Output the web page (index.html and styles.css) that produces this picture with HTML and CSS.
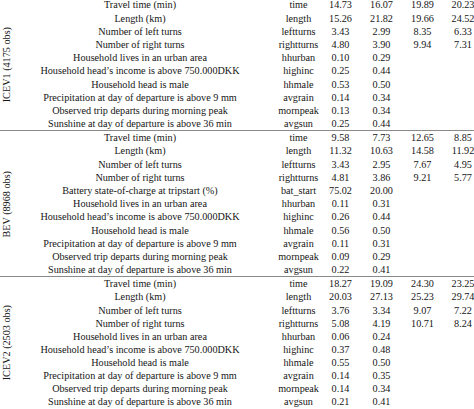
FILE: index.html
```html
<!DOCTYPE html>
<html>
<head>
<meta charset="utf-8">
<link rel="stylesheet" href="styles.css">
</head>
<body>
<div class="table">
  <section class="group g1">
    <div class="glabel"><span>ICEV1 (4175 obs)</span></div>
    <div class="row"><span class="lab">Travel time (min)</span><span class="var">time</span><span class="n">14.73</span><span class="n">16.07</span><span class="n">19.89</span><span class="n">20.23</span></div>
    <div class="row"><span class="lab">Length (km)</span><span class="var">length</span><span class="n">15.26</span><span class="n">21.82</span><span class="n">19.66</span><span class="n">24.52</span></div>
    <div class="row"><span class="lab">Number of left turns</span><span class="var">leftturns</span><span class="n">3.43</span><span class="n">2.99</span><span class="n">8.35</span><span class="n">6.33</span></div>
    <div class="row"><span class="lab">Number of right turns</span><span class="var">rightturns</span><span class="n">4.80</span><span class="n">3.90</span><span class="n">9.94</span><span class="n">7.31</span></div>
    <div class="row"><span class="lab">Household lives in an urban area</span><span class="var">hhurban</span><span class="n">0.10</span><span class="n">0.29</span><span class="n"></span><span class="n"></span></div>
    <div class="row"><span class="lab">Household head’s income is above 750.000DKK</span><span class="var">highinc</span><span class="n">0.25</span><span class="n">0.44</span><span class="n"></span><span class="n"></span></div>
    <div class="row"><span class="lab">Household head is male</span><span class="var">hhmale</span><span class="n">0.53</span><span class="n">0.50</span><span class="n"></span><span class="n"></span></div>
    <div class="row"><span class="lab">Precipitation at day of departure is above 9 mm</span><span class="var">avgrain</span><span class="n">0.14</span><span class="n">0.34</span><span class="n"></span><span class="n"></span></div>
    <div class="row"><span class="lab">Observed trip departs during morning peak</span><span class="var">mornpeak</span><span class="n">0.13</span><span class="n">0.34</span><span class="n"></span><span class="n"></span></div>
    <div class="row"><span class="lab">Sunshine at day of departure is above 36 min</span><span class="var">avgsun</span><span class="n">0.25</span><span class="n">0.44</span><span class="n"></span><span class="n"></span></div>
  </section>
  <section class="group g2">
    <div class="glabel"><span>BEV (8968 obs)</span></div>
    <div class="row"><span class="lab">Travel time (min)</span><span class="var">time</span><span class="n">9.58</span><span class="n">7.73</span><span class="n">12.65</span><span class="n">8.85</span></div>
    <div class="row"><span class="lab">Length (km)</span><span class="var">length</span><span class="n">11.32</span><span class="n">10.63</span><span class="n">14.58</span><span class="n">11.92</span></div>
    <div class="row"><span class="lab">Number of left turns</span><span class="var">leftturns</span><span class="n">3.43</span><span class="n">2.95</span><span class="n">7.67</span><span class="n">4.95</span></div>
    <div class="row"><span class="lab">Number of right turns</span><span class="var">rightturns</span><span class="n">4.81</span><span class="n">3.86</span><span class="n">9.21</span><span class="n">5.77</span></div>
    <div class="row"><span class="lab">Battery state-of-charge at tripstart (%)</span><span class="var">bat_start</span><span class="n">75.02</span><span class="n">20.00</span><span class="n"></span><span class="n"></span></div>
    <div class="row"><span class="lab">Household lives in an urban area</span><span class="var">hhurban</span><span class="n">0.11</span><span class="n">0.31</span><span class="n"></span><span class="n"></span></div>
    <div class="row"><span class="lab">Household head’s income is above 750.000DKK</span><span class="var">highinc</span><span class="n">0.26</span><span class="n">0.44</span><span class="n"></span><span class="n"></span></div>
    <div class="row"><span class="lab">Household head is male</span><span class="var">hhmale</span><span class="n">0.56</span><span class="n">0.50</span><span class="n"></span><span class="n"></span></div>
    <div class="row"><span class="lab">Precipitation at day of departure is above 9 mm</span><span class="var">avgrain</span><span class="n">0.11</span><span class="n">0.31</span><span class="n"></span><span class="n"></span></div>
    <div class="row"><span class="lab">Observed trip departs during morning peak</span><span class="var">mornpeak</span><span class="n">0.09</span><span class="n">0.29</span><span class="n"></span><span class="n"></span></div>
    <div class="row"><span class="lab">Sunshine at day of departure is above 36 min</span><span class="var">avgsun</span><span class="n">0.22</span><span class="n">0.41</span><span class="n"></span><span class="n"></span></div>
  </section>
  <section class="group g3">
    <div class="glabel"><span>ICEV2 (2503 obs)</span></div>
    <div class="row"><span class="lab">Travel time (min)</span><span class="var">time</span><span class="n">18.27</span><span class="n">19.09</span><span class="n">24.30</span><span class="n">23.25</span></div>
    <div class="row"><span class="lab">Length (km)</span><span class="var">length</span><span class="n">20.03</span><span class="n">27.13</span><span class="n">25.23</span><span class="n">29.74</span></div>
    <div class="row"><span class="lab">Number of left turns</span><span class="var">leftturns</span><span class="n">3.76</span><span class="n">3.34</span><span class="n">9.07</span><span class="n">7.22</span></div>
    <div class="row"><span class="lab">Number of right turns</span><span class="var">rightturns</span><span class="n">5.08</span><span class="n">4.19</span><span class="n">10.71</span><span class="n">8.24</span></div>
    <div class="row"><span class="lab">Household lives in an urban area</span><span class="var">hhurban</span><span class="n">0.06</span><span class="n">0.24</span><span class="n"></span><span class="n"></span></div>
    <div class="row"><span class="lab">Household head’s income is above 750.000DKK</span><span class="var">highinc</span><span class="n">0.37</span><span class="n">0.48</span><span class="n"></span><span class="n"></span></div>
    <div class="row"><span class="lab">Household head is male</span><span class="var">hhmale</span><span class="n">0.55</span><span class="n">0.50</span><span class="n"></span><span class="n"></span></div>
    <div class="row"><span class="lab">Precipitation at day of departure is above 9 mm</span><span class="var">avgrain</span><span class="n">0.14</span><span class="n">0.35</span><span class="n"></span><span class="n"></span></div>
    <div class="row"><span class="lab">Observed trip departs during morning peak</span><span class="var">mornpeak</span><span class="n">0.14</span><span class="n">0.34</span><span class="n"></span><span class="n"></span></div>
    <div class="row"><span class="lab">Sunshine at day of departure is above 36 min</span><span class="var">avgsun</span><span class="n">0.21</span><span class="n">0.41</span><span class="n"></span><span class="n"></span></div>
  </section>
</div>
</body>
</html>
```
FILE: styles.css
```css
html, body {
  margin: 0;
  padding: 0;
  background: #fff;
  overflow: hidden;
}
body {
  width: 474px;
  height: 409px;
  font-family: "Liberation Serif", "Times New Roman", serif;
  font-size: 10.2px;
  color: #151515;
}
.table {
  margin-top: -1.6px;
}
.group {
  display: grid;
  grid-template-columns: 38px 1fr;
}
.g2, .g3 {
  border-top: 1.5px solid #8a8a8a;
}
.glabel {
  grid-column: 1;
  grid-row: 1 / span 20;
  display: flex;
  align-items: center;
  justify-content: flex-start;
}
.glabel span {
  writing-mode: vertical-rl;
  transform: rotate(180deg);
  white-space: nowrap;
  margin-left: 1px;
}
.row {
  grid-column: 2;
  display: grid;
  grid-template-columns: 204px 78px 41px 41px 41px 40px;
  height: 13.2px;
  line-height: 13.2px;
  white-space: nowrap;
}
.g3 .row {
  height: 13.1px;
  line-height: 13.1px;
}
.row span {
  text-align: center;
}
.var {
  padding-left: 35px;
}
```
